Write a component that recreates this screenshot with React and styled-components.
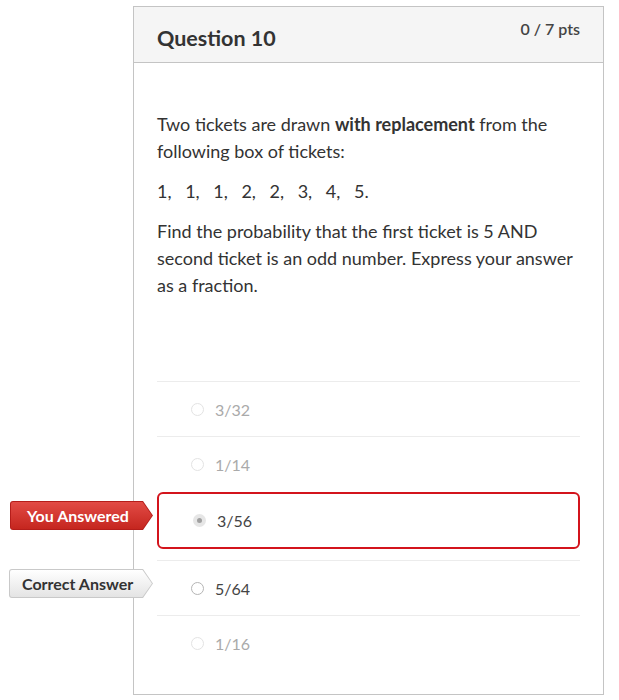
import React from "react";
import styled, { createGlobalStyle } from "styled-components";

const Global = createGlobalStyle`
  html, body { margin: 0; padding: 0; background: #fff; }
  body { font-family: Lato, "Open Sans", "Liberation Sans", sans-serif; color: #333; }
`;

const Page = styled.div`
  padding: 6px 0 0 133px;
`;

const Card = styled.div`
  width: 471px;
  box-sizing: border-box;
  border: 1px solid #c4c4c4;
  background: #fff;
`;

const Header = styled.div`
  display: flex;
  justify-content: space-between;
  align-items: flex-start;
  height: 55px;
  box-sizing: content-box;
  padding: 0 23px;
  background: #f5f5f5;
  border-bottom: 1px solid #c4c4c4;
`;

const Title = styled.h2`
  margin: 0;
  padding-top: 18px;
  font-size: 21.5px;
  line-height: 26px;
  font-weight: 700;
  color: #333;
`;

const Points = styled.div`
  padding-top: 12px;
  font-size: 16px;
  line-height: 20px;
  font-weight: 600;
  color: #444;
`;

const Body = styled.div`
  padding: 36px 23px 24px;
`;

const Text = styled.p`
  margin: 12px 0 13px;
  font-size: 18px;
  line-height: 27px;
  color: #333;
`;

const Spaced = styled.span`
  word-spacing: 9px;
`;

const Answers = styled.div`
  margin-top: 82px;
`;

const Row = styled.div`
  position: relative;
  border-top: 1px solid #ececec;
`;

const SelectedRow = styled.div`
  position: relative;
  padding: 1px 0 11px;
`;

const Choice = styled.div`
  display: flex;
  align-items: center;
  gap: 11px;
  height: 54px;
  box-sizing: border-box;
  padding-left: 34px;
  font-size: 16px;
  color: ${(p) => (p.$faded ? "#aaa" : "#444")};
`;

const WrongBox = styled(Choice)`
  height: 57px;
  border: 2px solid #d3141c;
  border-radius: 6px;
`;

const Radio = styled.span`
  width: 13px;
  height: 13px;
  box-sizing: border-box;
  border-radius: 50%;
  flex: none;
  border: 1px solid ${(p) => (p.$faded ? "#e3e3e3" : "#b5b5b5")};
  background: #fff;
`;

const CheckedRadio = styled.span`
  width: 13px;
  height: 13px;
  border-radius: 50%;
  flex: none;
  background: #e6e6e6;
  display: flex;
  align-items: center;
  justify-content: center;
  &::after {
    content: "";
    width: 5px;
    height: 5px;
    border-radius: 50%;
    background: #a0a0a0;
  }
`;

const shape = "polygon(0 0, calc(100% - 10px) 0, 100% 50%, calc(100% - 10px) 100%, 0 100%)";

const Tag = styled.div`
  position: absolute;
  right: calc(100% + 4px);
  top: ${(p) => p.$top}px;
  width: ${(p) => p.$w}px;
  height: 29px;
  box-sizing: border-box;
  padding: 1px;
  border-radius: 3px 0 0 3px;
  clip-path: ${shape};
  background: ${(p) => (p.$red ? "#b51d1a" : "#c9c9c9")};
  display: flex;
`;

const TagInner = styled.span`
  flex: 1;
  display: flex;
  align-items: center;
  padding-left: ${(p) => p.$pl}px;
  border-radius: 2px 0 0 2px;
  clip-path: polygon(0 0, calc(100% - 9.5px) 0, 100% 50%, calc(100% - 9.5px) 100%, 0 100%);
  background: ${(p) =>
    p.$red
      ? "linear-gradient(#e24b45, #c5261f)"
      : "linear-gradient(#ffffff, #e4e4e4)"};
  color: ${(p) => (p.$red ? "#fff" : "#333")};
  font-size: 16px;
  font-weight: 700;
  white-space: nowrap;
`;

export default function App() {
  return (
    <>
      <Global />
      <Page>
        <Card>
          <Header>
            <Title>Question 10</Title>
            <Points>0 / 7 pts</Points>
          </Header>
          <Body>
            <Text>
              Two tickets are drawn <b>with replacement</b> from the following box of tickets:
            </Text>
            <Text>
              <Spaced>1, 1, 1, 2, 2, 3, 4, 5.</Spaced>
            </Text>
            <Text>
              Find the probability that the first ticket is 5 AND second ticket is an odd number.
              Express your answer as a fraction.
            </Text>
            <Answers>
              <Row>
                <Choice $faded>
                  <Radio $faded />
                  3/32
                </Choice>
              </Row>
              <Row>
                <Choice $faded>
                  <Radio $faded />
                  1/14
                </Choice>
              </Row>
              <SelectedRow>
                <Tag $red $top={10} $w={143}>
                  <TagInner $red $pl={16}>You Answered</TagInner>
                </Tag>
                <WrongBox>
                  <CheckedRadio />
                  3/56
                </WrongBox>
              </SelectedRow>
              <Row>
                <Tag $top={8} $w={144}>
                  <TagInner $pl={12}>Correct Answer</TagInner>
                </Tag>
                <Choice>
                  <Radio />
                  5/64
                </Choice>
              </Row>
              <Row>
                <Choice $faded>
                  <Radio $faded />
                  1/16
                </Choice>
              </Row>
            </Answers>
          </Body>
        </Card>
      </Page>
    </>
  );
}
